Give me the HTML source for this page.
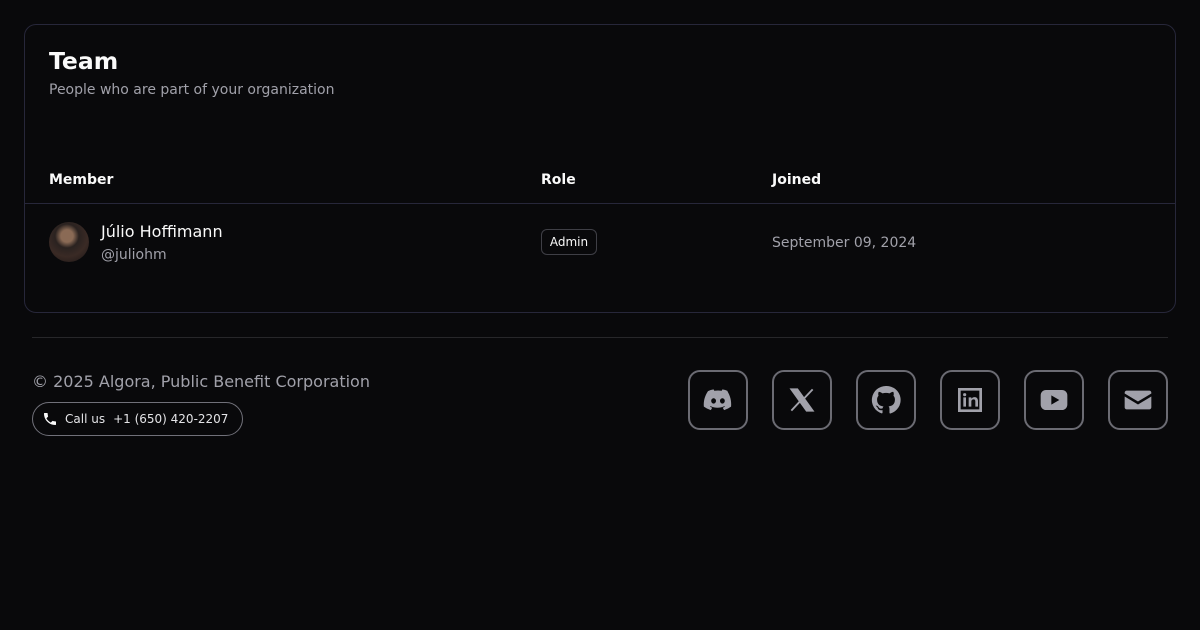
<!DOCTYPE html>
<html><head><meta charset="utf-8"><style>
*{box-sizing:border-box;margin:0;padding:0}
body{width:1200px;height:630px;background:#09090b;font-family:"DejaVu Sans","Liberation Sans",sans-serif;color:#fafafa;position:relative;overflow:hidden}
.card{position:absolute;left:24px;top:24px;width:1152px;height:289px;border:1px solid #27273a;border-radius:12px}
.abs{position:absolute;white-space:nowrap}
.ic{position:absolute;top:370px;width:60px;height:60px;border:2px solid #6b6b73;border-radius:12px;display:flex;align-items:center;justify-content:center}
.ic svg{width:32px;height:32px;fill:#a1a1aa}
</style></head><body>
<div class="card">
<div class="abs" style="left:24px;top:22px;font-size:23.5px;font-weight:bold">Team</div>
<div class="abs" style="left:24px;top:57px;font-size:14px;color:#a1a1aa">People who are part of your organization</div>
<div class="abs" style="left:24px;top:147px;font-size:14px;font-weight:bold">Member</div>
<div class="abs" style="left:516px;top:147px;font-size:14px;font-weight:bold">Role</div>
<div class="abs" style="left:747px;top:147px;font-size:14px;font-weight:bold">Joined</div>
<div class="abs" style="left:0;top:178px;width:1150px;height:1px;background:#27273a"></div>
<div class="abs" style="left:24px;top:197px;width:40px;height:40px;border-radius:50%;background:radial-gradient(circle at 45% 35%,#8a6a55 0 18%,#2a2220 35%,#3a2a25 60%,#1a1515 100%)"></div>
<div class="abs" style="left:76px;top:197px;font-size:16px">Júlio Hoffimann</div>
<div class="abs" style="left:76px;top:222px;font-size:14px;color:#a1a1aa">@juliohm</div>
<div class="abs" style="left:516px;top:204px;width:56px;height:26px;border:1px solid #3f3f46;border-radius:6px;font-size:12px;display:flex;align-items:center;justify-content:center">Admin</div>
<div class="abs" style="left:747px;top:210px;font-size:14px;color:#a1a1aa">September 09, 2024</div>
</div>
<div class="abs" style="left:32px;top:337px;width:1136px;height:1px;background:#27272a"></div>
<div class="abs" style="left:32px;top:372px;font-size:16px;color:#a1a1aa">© 2025 Algora, Public Benefit Corporation</div>
<div class="abs" style="left:32px;top:402px;width:211px;height:34px;border:1px solid #71717a;border-radius:17px;font-size:12px;color:#e4e4e7;display:flex;align-items:center;padding-left:9px">
<svg width="16" height="16" viewBox="0 0 24 24" fill="#fafafa"><path d="M6.6 10.8c1.4 2.8 3.8 5.1 6.6 6.6l2.2-2.2c.3-.3.7-.4 1-.2 1.1.4 2.3.6 3.6.6.6 0 1 .4 1 1V20c0 .6-.4 1-1 1C10.6 21 3 13.4 3 4c0-.6.4-1 1-1h3.5c.6 0 1 .4 1 1 0 1.3.2 2.5.6 3.6.1.3 0 .7-.2 1z"/></svg>
<span style="margin-left:7px">Call us</span><span style="margin-left:8px">+1 (650) 420-2207</span></div>
<div class="ic" style="left:688px"><svg viewBox="0 0 24 24"><path d="M19.5 5.3A17 17 0 0 0 15.3 4l-.5 1.1a15.6 15.6 0 0 0-5.6 0L8.7 4a17 17 0 0 0-4.2 1.3C1.8 9.3 1.1 13.2 1.4 17a17 17 0 0 0 5.2 2.6l1.1-1.8c-.6-.2-1.2-.5-1.7-.9l.4-.3c3.4 1.6 7.1 1.6 10.4 0l.4.3c-.5.4-1.1.7-1.7.9l1.1 1.8a17 17 0 0 0 5.2-2.6c.4-4.4-.7-8.3-2.8-11.7zM8.7 14.7c-1 0-1.8-.9-1.8-2s.8-2 1.8-2 1.8.9 1.8 2-.8 2-1.8 2zm6.6 0c-1 0-1.8-.9-1.8-2s.8-2 1.8-2 1.8.9 1.8 2-.8 2-1.8 2z"/></svg></div>
<div class="ic" style="left:772px"><svg viewBox="0 0 24 24" fill="none" stroke="#a1a1aa" stroke-width="1.4"><path d="M4 4l11.5 16H20L8.5 4z"/><path d="M4 20l6.8-7.3M20 4l-6.6 7"/></svg></div>
<div class="ic" style="left:856px"><svg viewBox="0 0 24 24"><path d="M12 1.5a10.5 10.5 0 0 0-3.3 20.5c.5.1.7-.2.7-.5v-1.9c-2.9.6-3.5-1.3-3.5-1.3-.5-1.2-1.2-1.5-1.2-1.5-.9-.7.1-.6.1-.6 1 .1 1.6 1.1 1.6 1.1.9 1.6 2.5 1.2 3.1.9.1-.7.4-1.1.6-1.4-2.3-.3-4.8-1.2-4.8-5.2 0-1.1.4-2.1 1.1-2.8-.1-.3-.5-1.400.1-2.9 0 0 .9-.3 2.9 1.1a10 10 0 0 1 5.2 0c2-1.4 2.9-1.1 2.9-1.1.6 1.5.2 2.6.1 2.9.7.7 1.1 1.7 1.1 2.8 0 4-2.5 4.9-4.8 5.2.4.3.7 1 .7 1.9v2.9c0 .3.2.6.7.5A10.5 10.5 0 0 0 12 1.5z"/></svg></div>
<div class="ic" style="left:940px"><svg viewBox="0 0 24 24"><path d="M3 3h18v18H3zM5 5v14h14V5zM7 10h2v7H7zM8 6.8a1.2 1.2 0 1 1 0 2.4 1.2 1.2 0 0 1 0-2.4zM11 10h2v1c.5-.7 1.3-1.2 2.3-1.2 1.7 0 2.7 1 2.7 3V17h-2v-4c0-1-.4-1.5-1.3-1.5S13 12 13 13v4h-2z"/></svg></div>
<div class="ic" style="left:1024px"><svg viewBox="0 0 24 24"><path d="M6 4.5h12a4 4 0 0 1 4 4v7a4 4 0 0 1-4 4H6a4 4 0 0 1-4-4v-7a4 4 0 0 1 4-4zM10 8.5v7l6-3.5z" fill-rule="evenodd"/></svg></div>
<div class="ic" style="left:1108px"><svg viewBox="0 0 24 24"><path d="M3.5 5h17c.8 0 1.5.7 1.5 1.5v.6l-10 6-10-6v-.6C2 5.7 2.7 5 3.5 5zM2 9.4l10 6 10-6v8.1c0 .8-.7 1.5-1.5 1.5h-17c-.8 0-1.5-.7-1.5-1.5z"/></svg></div>
</body></html>
